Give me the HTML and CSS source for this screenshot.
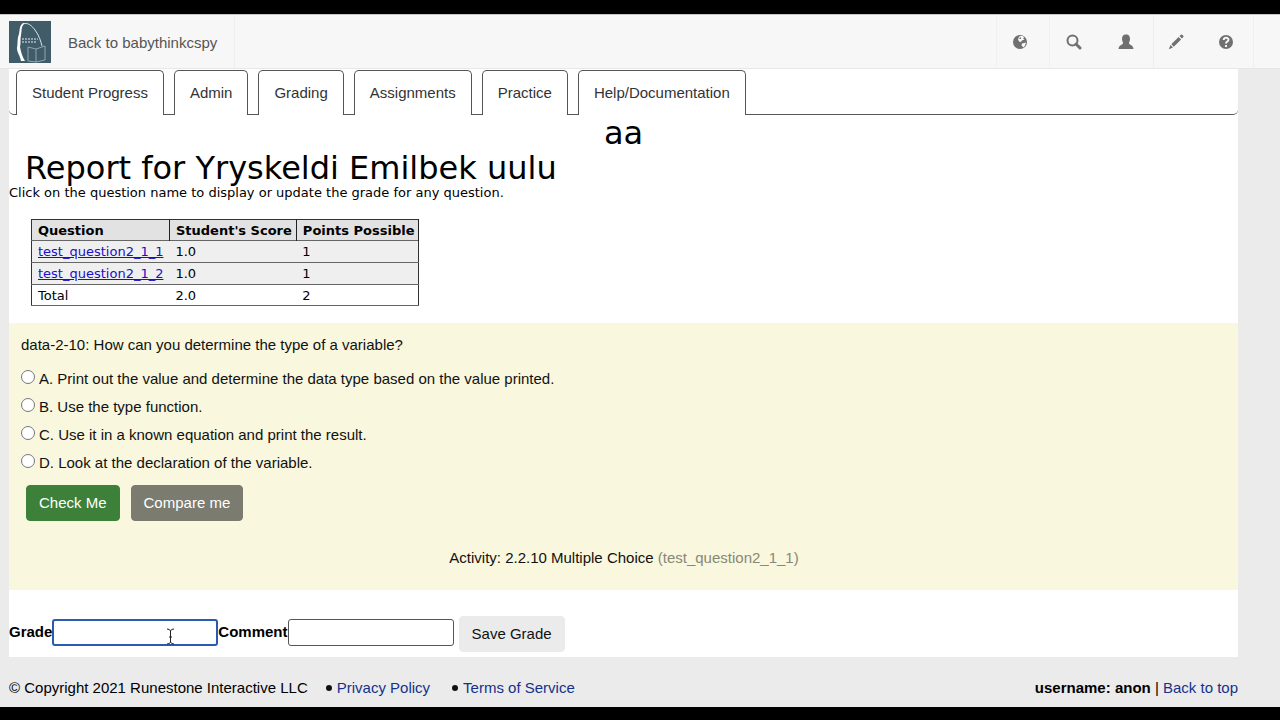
FILE: index.html
```html
<!DOCTYPE html>
<html lang="en">
<head>
<meta charset="utf-8">
<meta name="viewport" content="width=device-width, initial-scale=1">
<title>Report for Yryskeldi Emilbek uulu</title>
<link rel="stylesheet" href="styles.css">
</head>
<body>
<header class="navbar">
  <a class="logo" href="#" aria-label="Runestone home">
    <svg width="42" height="42" viewBox="0 0 42 42">
      <rect width="42" height="42" fill="#415c69"/>
      <path d="M14 2c-4 3-3 7-4 11-2 5-1 9-2 14 0 5 3 7 4 13h4c-3-5-4-9-5-14 1-4 0-8 1-12 1-5 0-9 4-12z" fill="#fff"/>
      <path d="M14 3c5-2 9 2 12 6 4 5 6 12 7 16" fill="none" stroke="#dce5e8" stroke-width="1"/>
      <path d="M19 26l8 2 9-3v14l-9 2-8-1zM27 28v13" fill="none" stroke="#91a6ae" stroke-width="1"/>
      <path d="M13 18h16M13 21h15" stroke="#8fa4ad" stroke-width="2" stroke-dasharray="2 1"/>
    </svg>
  </a>
  <a class="back" href="#">Back to babythinkcspy</a>
  <nav class="tools" aria-label="Tools">
    <a class="tool globe" href="#" aria-label="Social"><svg width="16" height="16" viewBox="0 0 16 16"><circle cx="8" cy="8" r="7" fill="#707070"/><path d="M7 2.500l3-.8 2.500 1.500-1.500 1 1.500 1.500-2 .5-1.500 1 .5 1-2-.5-1.500-2zM10 9.500l4-1-1 3-1.500 2-2-2z" fill="#f7f7f7"/><path d="M7.500 3.500h1.500v1.500h-1.500z" fill="#707070"/></svg></a>
    <a class="tool search" href="#" aria-label="Search"><svg width="16" height="16" viewBox="0 0 16 16" fill="none" stroke="#707070"><circle cx="6.5" cy="6.5" r="5" stroke-width="2"/><path d="M10 10l4 4" stroke-width="3" stroke-linecap="round"/></svg></a>
    <a class="tool user" href="#" aria-label="User"><svg width="16" height="16" viewBox="0 0 16 16"><path d="M8 .5c3 0 4 2 4 4.500 0 2-1 3-1 4 0 2 4.500 2 4.500 6H.5c0-4 4.500-4 4.500-6 0-1-1-2-1-4C4 2.500 5 .5 8 .5z" fill="#707070"/></svg></a>
    <a class="tool pencil" href="#" aria-label="Edit"><svg width="16" height="16" viewBox="0 0 16 16" fill="#707070"><path d="M11.500 2L13 .7q.8-.5 1.500.2l.8.8q.5.7 0 1.300L14 4.500zM10.600 2.900l2.500 2.500-7.300 7.300-2.500-2.500zM2.500 11l2.500 2.500L.8 15.200z"/></svg></a>
    <a class="tool help" href="#" aria-label="Help"><svg width="16" height="16" viewBox="0 0 16 16"><circle cx="8" cy="8" r="7" fill="#707070"/><path d="M5.700 6c0-3 4.800-3 4.800-.3C10.500 7.500 8 7.500 8 9.500" fill="none" stroke="#f7f7f7" stroke-width="2"/><path d="M7 11h2v2H7z" fill="#f7f7f7"/></svg></a>
  </nav>
</header>
<main class="page">
  <nav aria-label="Instructor">
    <ul class="tabs">
      <li><a href="#">Student Progress</a></li>
      <li><a href="#">Admin</a></li>
      <li><a href="#">Grading</a></li>
      <li><a href="#">Assignments</a></li>
      <li><a href="#">Practice</a></li>
      <li><a href="#">Help/Documentation</a></li>
    </ul>
  </nav>
  <div class="report">
    <p class="course">aa</p>
    <h1>Report for Yryskeldi Emilbek uulu</h1>
    <p class="hint">Click on the question name to display or update the grade for any question.</p>
    <table class="scores">
      <thead><tr><th scope="col">Question</th><th scope="col">Student's Score</th><th scope="col">Points Possible</th></tr></thead>
      <tbody>
        <tr><td><a href="#">test_question2_1_1</a></td><td>1.0</td><td>1</td></tr>
        <tr><td><a href="#">test_question2_1_2</a></td><td>1.0</td><td>1</td></tr>
      </tbody>
      <tfoot><tr><td>Total</td><td>2.0</td><td>2</td></tr></tfoot>
    </table>
  </div>
  <section class="question">
    <p class="prompt">data-2-10: How can you determine the type of a variable?</p>
    <div class="choices">
      <label><input type="radio" name="answer">A. Print out the value and determine the data type based on the value printed.</label>
      <label><input type="radio" name="answer">B. Use the type function.</label>
      <label><input type="radio" name="answer">C. Use it in a known equation and print the result.</label>
      <label><input type="radio" name="answer">D. Look at the declaration of the variable.</label>
    </div>
    <div class="actions">
      <button class="btn check" type="button">Check Me</button>
      <button class="btn compare" type="button">Compare me</button>
    </div>
    <p class="caption">Activity: 2.2.10 Multiple Choice <span>(test_question2_1_1)</span></p>
  </section>
  <form class="grading">
    <label for="grade">Grade</label>
    <div class="field">
      <input class="active" id="grade" type="text">
      <svg class="cursor" width="9" height="17" viewBox="0 0 9 17" fill="none" stroke="#222"><path d="M1 1q3 0 3.500 2Q5 1 8 1M4.500 3v11M1 16q3 0 3.500-2Q5 16 8 16M3 9h3"/></svg>
    </div>
    <label for="comment">Comment</label>
    <div class="field"><input id="comment" type="text"></div>
    <button class="btn save" type="button">Save Grade</button>
  </form>
</main>
<footer class="footer">
  <span>© Copyright 2021 Runestone Interactive LLC</span>
  <ul>
    <li><a href="#">Privacy Policy</a></li>
    <li><a href="#">Terms of Service</a></li>
  </ul>
  <p><strong>username: anon</strong> | <a href="#">Back to top</a></p>
</footer>
</body>
</html>
```
FILE: styles.css
```css
* { box-sizing: border-box; }
body {
  margin: 0;
  min-height: 100vh;
  display: flex;
  flex-direction: column;
  border-top: 14px solid #000;
  border-bottom: 13px solid #000;
  background: #ebebeb;
  color: #111;
  font: 15px/20px "Liberation Sans", Arial, sans-serif;
}
p, h1, ul { margin: 0; padding: 0; }
ul { list-style: none; }
svg { display: block; }

.navbar {
  display: flex;
  align-items: stretch;
  height: 55px;
  padding: 0 26px 0 9px;
  background: #f7f7f7;
  border-top: 1px solid #c8c8c8;
  border-bottom: 1px solid #e7e7e7;
}
.logo { display: flex; align-items: center; }
.back {
  display: flex;
  align-items: center;
  padding: 2px 17px 0;
  border-right: 1px solid #eee;
  color: #555;
  text-decoration: none;
}
.tools { display: flex; margin-left: auto; }
.tool { display: flex; align-items: center; justify-content: center; width: 50px; padding-right: 6px; }
.tool.globe { width: 54px; border-left: 1px solid #f0f0f0; border-right: 1px solid #f0f0f0; }
.tool.search { width: 54px; }
.tool.user { border-right: 1px solid #eee; }
.tool.help { border-right: 1px solid #f0f0f0; }

.page { margin: 0 42px 0 9px; background: #fff; }
.tabs { display: flex; padding-top: 1px; }
.tabs::before, .tabs li::after {
  content: "";
  width: 10px;
  border-bottom: 1px solid #555;
}
.tabs::before { width: 7px; border-radius: 0 0 0 5px; }
.tabs li { display: flex; }
.tabs li:last-child, .tabs li:last-child::after { flex: 1; }
.tabs li:last-child::after { border-radius: 0 0 5px 0; }
.tabs a {
  padding: 12px 15px;
  border: 1px solid #555;
  border-bottom: 0;
  border-radius: 5px 5px 0 0;
  color: #333;
  text-decoration: none;
}

.report { font-family: "DejaVu Sans", Verdana, sans-serif; font-size: 13px; color: #000; }
.course { font-size: 32px; line-height: 36px; text-align: center; }
.report h1 { padding-left: 16px; font-size: 32px; line-height: 34px; font-weight: 400; }
.hint { line-height: 16px; }
.scores {
  margin: 18px 0 17px 22px;
  border-collapse: collapse;
  line-height: 17px;
  border: 1px solid #333;
}
.scores th, .scores td { padding: 2px 4px 1px 6px; text-align: left; }
.scores tbody td { padding-bottom: 2px; }
.scores th:first-child, .scores td:first-child { padding-right: 6px; }
.scores th { background: #e2e2e2; border-right: 1px solid #222; }
.scores tr { border-bottom: 1px solid #666; }
.scores tbody { background: #efefef; }
.scores a { color: #1a10c8; }

.question { padding: 12px 11px 22px 12px; background: #f9f7dd; }
.choices { display: grid; gap: 8px; margin-top: 14px; justify-content: start; }
.choices label { display: flex; align-items: center; gap: 4px; }
.choices input { width: 14px; height: 14px; margin: 0 0 4px; }
.btn { padding: 7px 12px; border: 1px solid; border-radius: 4px; font: inherit; }
.actions { display: flex; gap: 11px; margin: 12px 5px 0; }
.check { background: #3c8039; border-color: #3c8039; color: #fff; }
.compare { background: #7b7b70; border-color: #7b7b70; color: #fff; }
.caption { margin-top: 27px; text-align: center; }
.caption span { color: #888878; }

.grading { display: flex; align-items: center; padding: 26px 0 5px; }
.grading label, .field { margin-bottom: 4px; }
.grading label { font-weight: 700; color: #000; }
.grading input {
  display: block;
  width: 166px;
  height: 27px;
  padding: 2px 6px;
  border: 1px solid #555;
  border-radius: 3px;
  font: inherit;
  outline: 0;
}
.grading .active { border: 2px solid #2a5bb0; }
.field { position: relative; }
.cursor { position: absolute; left: 114px; top: 9px; }
.save { margin-left: 5px; background: #ebebeb; border-color: #ebebeb; color: #111; }

.footer { display: flex; padding: 21px 42px 8px 9px; color: #000; }
.footer ul { display: flex; gap: 22px; margin-left: 18px; }
.footer li { display: flex; align-items: center; }
.footer li::before { content: ""; width: 6px; height: 6px; margin-right: 5px; border-radius: 50%; background: #111; }
.footer p { margin-left: auto; }
.footer a { color: #14328c; text-decoration: none; }
```
